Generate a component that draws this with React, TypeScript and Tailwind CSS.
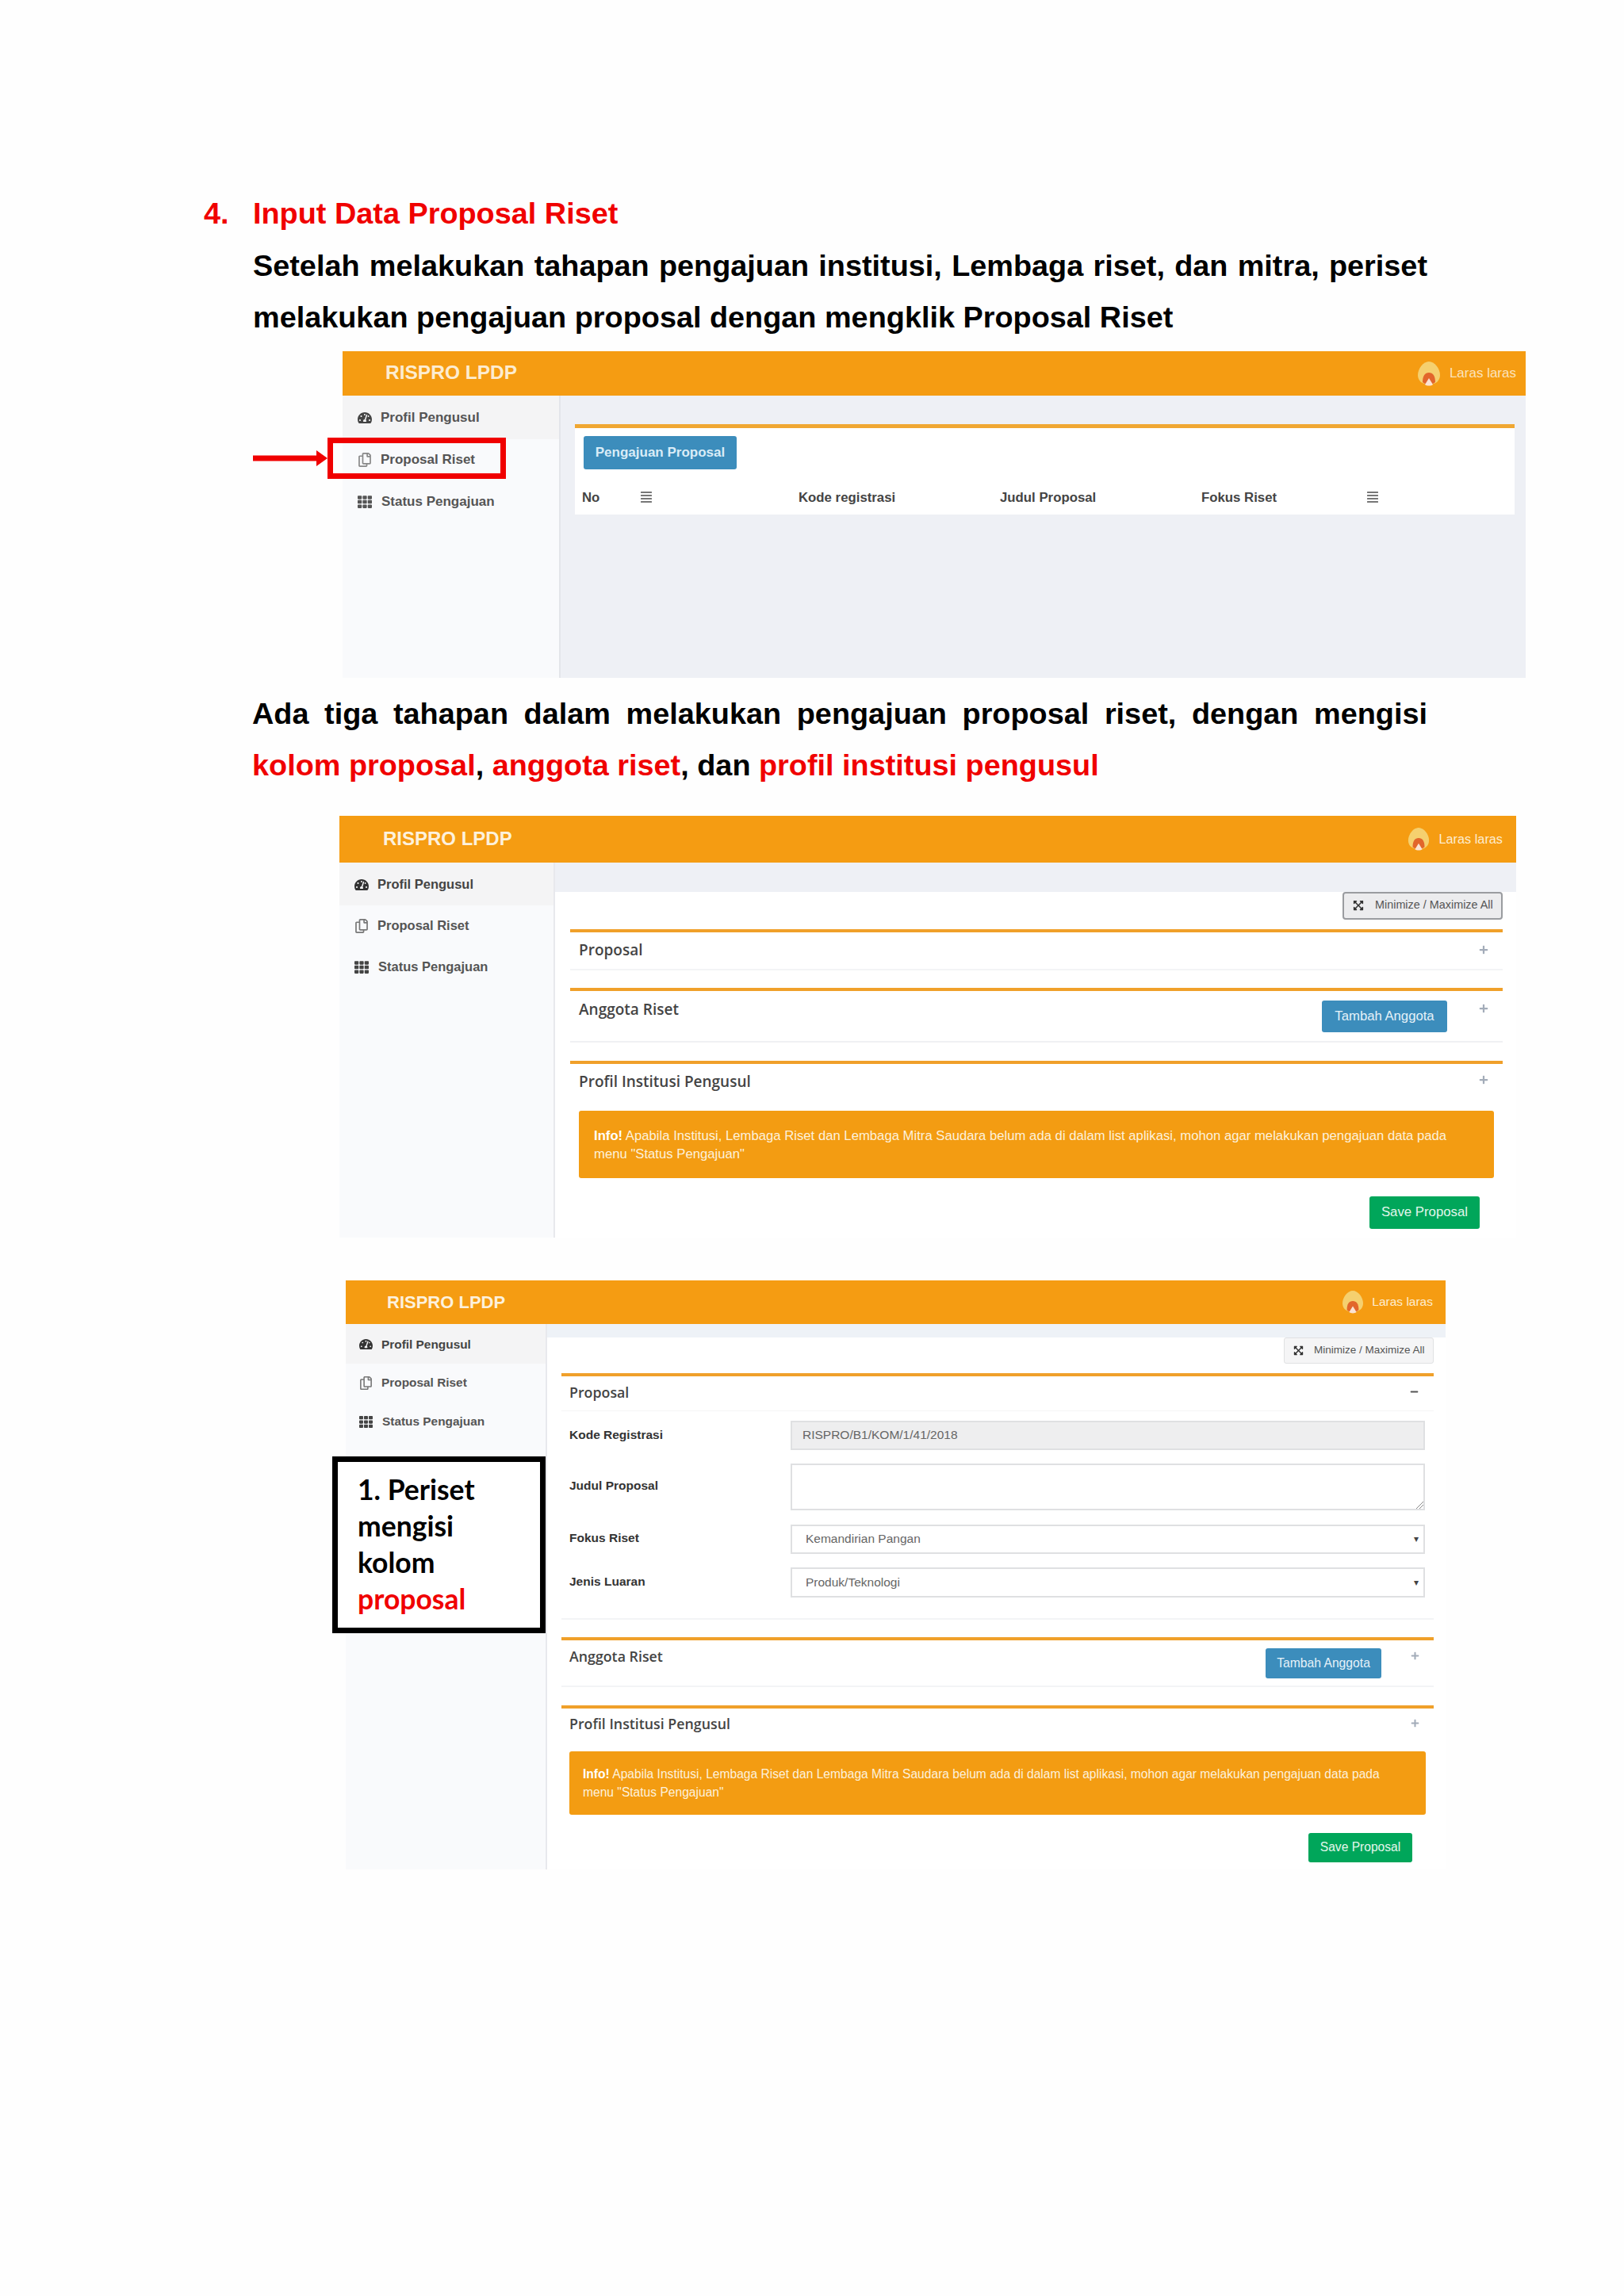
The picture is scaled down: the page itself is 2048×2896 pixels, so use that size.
import type { ReactNode } from "react";
import { FaTachometerAlt, FaRegCopy, FaTh, FaExpandArrowsAlt, FaPlus, FaMinus, FaAlignJustify } from "react-icons/fa";

function Flame({ className }: { className: string }) {
  return (
    <svg viewBox="0 0 28 32" className={className}>
      <path d="M14 1C21 1 28 10 28 18c0 7-5 12-14 12S0 25 0 18C0 10 7 1 14 1z" fill="#f5d06f" />
      <path d="M6 27C6 19 9 15 14 15s8 4 8 12c-2 2-5 3-8 3s-6-1-8-3z" fill="#e2662b" />
      <path d="M14 22l5 8c-2 2-8 2-10 0z" fill="#fbe3d2" />
    </svg>
  );
}

function NavItem({ icon, label, className }: { icon: ReactNode; label: string; className: string }) {
  return (
    <div className={`flex items-center ${className}`}>
      {icon}
      <span>{label}</span>
    </div>
  );
}

function Plus({ className }: { className: string }) {
  return <FaPlus className={`text-[#a3acb9] ${className}`} />;
}

const title = "font-['Open_Sans',sans-serif] font-semibold text-[#444]";

export default function App() {
  return (
    <div className="w-[2048px] h-[2896px] bg-[#fefefe] pt-[237px] font-['Liberation_Sans',Arial,sans-serif]">
      {/* heading */}
      <div className="flex text-[37.850px] leading-[65.5px] font-bold">
        <div className="w-[62px] ml-[257px] text-[#f00000]">4.</div>
        <div className="w-[1481px]">
          <div className="text-[#f00000]">Input Data Proposal Riset</div>
          <p className="text-justify text-black">
            Setelah melakukan tahapan pengajuan institusi, Lembaga riset, dan mitra, periset melakukan pengajuan proposal dengan mengklik Proposal Riset
          </p>
        </div>
      </div>

      {/* first screenshot */}
      <div className="relative ml-[432px] mt-[9px] w-[1492px] h-[412px] flex flex-col">
        <div className="h-[56px] bg-[#f59c12] flex items-center justify-between pl-[54px] pr-[12px] text-white">
          <span className="text-[24.500px] font-bold text-[#fdecd0]">RISPRO LPDP</span>
          <div className="flex items-center gap-[12px] text-[17px] text-[#fbe3bd]">
            <Flame className="w-[28px] h-[32px]" />
            Laras laras
          </div>
        </div>
        <div className="flex flex-1">
          <div className="w-[275px] bg-[#f9fafc] border-r-2 border-[#e3e5ea] text-[17px] font-bold text-[#555]">
            <NavItem className="h-[55px] pt-[2px] pl-[19px] gap-[11px] bg-[#f4f4f5]" icon={<FaTachometerAlt className="w-[18px] h-[18px] text-[#444]" />} label="Profil Pengusul" />
            <NavItem className="h-[53px] pl-[19px] gap-[11px]" icon={<FaRegCopy className="w-[18px] h-[18px] text-[#888]" />} label="Proposal Riset" />
            <NavItem className="h-[53px] pl-[19px] gap-[12px]" icon={<FaTh className="w-[18px] h-[18px] text-[#555]" />} label="Status Pengajuan" />
          </div>
          <div className="flex-1 bg-[#eef0f5] pt-[36px] pl-[18px] pr-[14px]">
            <div className="h-[114px] bg-white border-t-[5px] border-[#f0a732]">
              <button className="block ml-[11px] mt-[10px] w-[193px] h-[42px] bg-[#3c8dbc] rounded-[3px] text-[17px] font-bold text-[#d9ecf7]">
                Pengajuan Proposal
              </button>
              <div className="grid grid-cols-[73px_200px_254px_254px_208px_16px] items-center ml-[9px] mt-[23px] text-[16.800px] font-bold text-[#444]">
                <span>No</span>
                <FaAlignJustify className="w-[16px] h-[16px] text-[#777]" />
                <span>Kode registrasi</span>
                <span>Judul Proposal</span>
                <span>Fokus Riset</span>
                <FaAlignJustify className="w-[16px] h-[16px] text-[#777]" />
              </div>
            </div>
          </div>
        </div>

        {/* red callout over the sidebar */}
        <div className="absolute left-[-19px] top-[109px] w-[225px] h-[52px] border-[7px] border-[#f00000]" />
        <svg viewBox="0 0 94 24" className="absolute left-[-113px] top-[123px] w-[94px] h-[24px]">
          <path d="M0 8.500h80V2l14 10-14 10v-6.500H0z" fill="#f00000" />
        </svg>
      </div>

      {/* second paragraph */}
      <div className="ml-[318px] mt-[13px] w-[1482px] text-[37.850px] leading-[65.5px] font-bold text-black">
        <p className="text-justify">
          Ada tiga tahapan dalam melakukan pengajuan proposal riset, dengan mengisi <span className="text-[#f00000]">kolom proposal</span>, <span className="text-[#f00000]">anggota riset</span>, dan <span className="text-[#f00000]">profil institusi pengusul</span>
        </p>
      </div>

      {/* second screenshot */}
      <div className="ml-[428px] mt-[30px] w-[1484px] h-[532px] flex flex-col">
        <div className="h-[59px] bg-[#f59c12] flex items-center justify-between pl-[55px] pr-[17px]">
          <span className="text-[24px] font-bold text-[#fdf1dc]">RISPRO LPDP</span>
          <div className="flex items-center gap-[11px] text-[16.300px] text-[#fdecd0]">
            <Flame className="w-[28px] h-[30px]" />
            Laras laras
          </div>
        </div>
        <div className="flex flex-1">
          <div className="w-[272px] bg-[#f9fafc] border-r-2 border-[#e8e9ed] text-[16.500px] font-bold text-[#444]">
            <NavItem className="h-[54px] pt-[2px] pl-[19px] gap-[11px] bg-[#f4f4f5]" icon={<FaTachometerAlt className="w-[18px] h-[18px] text-[#333]" />} label="Profil Pengusul" />
            <NavItem className="h-[52px] pl-[19px] gap-[11px] text-[#555]" icon={<FaRegCopy className="w-[18px] h-[18px] text-[#777]" />} label="Proposal Riset" />
            <NavItem className="h-[52px] pl-[19px] gap-[12px] text-[#555]" icon={<FaTh className="w-[18px] h-[18px] text-[#444]" />} label="Status Pengajuan" />
          </div>
          <div className="flex-1 bg-white">
            <div className="h-[37px] bg-[#eef0f5]" />
            <div className="pl-[19px] pr-[17px]">
              <div className="flex justify-end">
                <button className="flex items-center w-[202px] h-[35px] pl-[11px] gap-[14px] bg-[#ececee] border-2 border-[#9a9ca0] rounded-[4px] text-[14.400px] text-[#555]">
                  <FaExpandArrowsAlt className="w-[14px] h-[14px] text-[#333]" />
                  Minimize / Maximize All
                </button>
              </div>
              <div className="mt-[12px] h-[52px] border-t-4 border-[#f0a02a] border-b-2 border-b-[#f3f4f6] flex justify-between pt-[8px] pl-[11px] pr-[18px]">
                <span className={`text-[19px] leading-[28px] ${title}`}>Proposal</span>
                <Plus className="w-[12px] h-[12px] mt-[8px]" />
              </div>
              <div className="mt-[22px] h-[69px] border-t-4 border-[#f0a02a] border-b-2 border-b-[#f0f1f3] flex pt-[9px] pl-[11px] pr-[18px]">
                <span className={`flex-1 text-[19px] leading-[28px] ${title}`}>Anggota Riset</span>
                <button className="w-[158px] h-[40px] mt-[3px] bg-[#3c8dbc] rounded-[3px] text-[16.700px] text-[#e6f2f9]">Tambah Anggota</button>
                <Plus className="w-[12px] h-[12px] mt-[7px] ml-[40px]" />
              </div>
              <div className="mt-[23px] border-t-4 border-[#f0a02a] pt-[8px] px-[11px] pb-[3px]">
                <div className="flex justify-between pr-[4px] h-[51px]">
                  <span className={`text-[19px] leading-[28px] ${title}`}>Profil Institusi Pengusul</span>
                  <Plus className="w-[12px] h-[12px] mt-[6px] mr-[3px]" />
                </div>
                <div className="h-[85px] bg-[#f39c12] rounded-[3px] pt-[20px] pl-[19px] text-[16.700px] leading-[23px] text-[#fdf1dc]">
                  <b className="text-white">Info!</b> Apabila Institusi, Lembaga Riset dan Lembaga Mitra Saudara belum ada di dalam list aplikasi, mohon agar melakukan pengajuan data pada<br />
                  menu "Status Pengajuan"
                </div>
              </div>
              <div className="flex justify-end mt-[20px] pr-[29px]">
                <button className="w-[139px] h-[41px] bg-[#00a65a] rounded-[3px] text-[16.800px] text-[#e3f6ec]">Save Proposal</button>
              </div>
            </div>
          </div>
        </div>
      </div>

      {/* third screenshot */}
      <div className="relative ml-[436px] mt-[54px] w-[1387px] h-[743px] flex flex-col">
        <div className="h-[55px] bg-[#f59c12] flex items-center justify-between pl-[52px] pr-[16px]">
          <span className="text-[22px] font-bold text-[#fdf1dc]">RISPRO LPDP</span>
          <div className="flex items-center gap-[11px] text-[15.500px] text-[#fdecd0]">
            <Flame className="w-[26px] h-[30px]" />
            Laras laras
          </div>
        </div>
        <div className="flex flex-1">
          <div className="w-[254px] bg-[#f9fafc] border-r-2 border-[#e8e9ed] text-[15.400px] font-bold text-[#444]">
            <NavItem className="h-[50px] pt-[2px] pl-[17px] gap-[11px] bg-[#f4f4f5]" icon={<FaTachometerAlt className="w-[17px] h-[17px] text-[#333]" />} label="Profil Pengusul" />
            <NavItem className="h-[49px] pl-[17px] gap-[11px] text-[#555]" icon={<FaRegCopy className="w-[17px] h-[17px] text-[#777]" />} label="Proposal Riset" />
            <NavItem className="h-[49px] pl-[17px] gap-[12px] text-[#555]" icon={<FaTh className="w-[17px] h-[17px] text-[#444]" />} label="Status Pengajuan" />
          </div>
          <div className="flex-1 bg-white">
            <div className="h-[17px] bg-[#eef2f7]" />
            <div className="pl-[18px] pr-[15px]">
              <div className="flex justify-end">
                <button className="flex items-center w-[189px] h-[33px] pl-[11px] gap-[13px] bg-[#f5f5f6] border border-[#e0e1e3] rounded-[3px] text-[13.500px] text-[#555]">
                  <FaExpandArrowsAlt className="w-[13px] h-[13px] text-[#333]" />
                  Minimize / Maximize All
                </button>
              </div>
              <div className="mt-[12px] h-[311px] border-t-4 border-[#f0a02a] border-b-2 border-b-[#f3f4f6]">
                <div className="flex justify-between h-[44px] pt-[7px] pl-[10px] pr-[19px] border-b border-[#f5f5f6]">
                  <span className={`text-[17.800px] leading-[26px] ${title}`}>Proposal</span>
                  <FaMinus className="w-[11px] h-[11px] mt-[7px] text-[#555]" />
                </div>
                <div className="grid grid-cols-[279px_800px] content-start pl-[10px] pt-[12px] text-[15.500px]">
                  <label className="font-bold text-[#333] self-start mt-[6px]">Kode Registrasi</label>
                  <div className="h-[37px] bg-[#eeeeef] border-2 border-[#dfe0e2] flex items-center pl-[13px] text-[#666]">RISPRO/B1/KOM/1/41/2018</div>
                  <label className="font-bold text-[#333] self-center mt-[15px]">Judul Proposal</label>
                  <div className="relative h-[59px] mt-[17px] border-2 border-[#dfe0e2] bg-white">
                    <svg viewBox="0 0 10 10" className="absolute right-0 bottom-0 w-[10px] h-[10px]">
                      <path d="M1 10L10 1M5 10l5-5" stroke="#888" strokeWidth="1" />
                    </svg>
                  </div>
                  <label className="font-bold text-[#333] self-center mt-[16px]">Fokus Riset</label>
                  <div className="h-[37px] mt-[18px] border-2 border-[#dfe0e2] flex items-center justify-between pl-[17px] pr-[6px] text-[#666]">
                    Kemandirian Pangan<span className="text-[12px] text-[#444]">▾</span>
                  </div>
                  <label className="font-bold text-[#333] self-center mt-[15px]">Jenis Luaran</label>
                  <div className="h-[38px] mt-[17px] border-2 border-[#dfe0e2] flex items-center justify-between pl-[17px] pr-[6px] text-[#666]">
                    Produk/Teknologi<span className="text-[12px] text-[#444]">▾</span>
                  </div>
                </div>
              </div>
              <div className="mt-[22px] h-[63px] border-t-4 border-[#f0a02a] border-b-2 border-b-[#f3f4f6] flex pt-[7px] pl-[10px] pr-[18px]">
                <span className={`flex-1 text-[17.800px] leading-[26px] ${title}`}>Anggota Riset</span>
                <button className="w-[146px] h-[38px] mt-[3px] bg-[#3c8dbc] rounded-[3px] text-[15.700px] text-[#e6f2f9]">Tambah Anggota</button>
                <Plus className="w-[11px] h-[11px] mt-[7px] ml-[37px]" />
              </div>
              <div className="mt-[23px] border-t-4 border-[#f0a02a] pt-[6px] px-[10px] pb-[2px]">
                <div className="flex justify-between h-[48px] pr-[8px]">
                  <span className={`text-[17.800px] leading-[26px] ${title}`}>Profil Institusi Pengusul</span>
                  <Plus className="w-[11px] h-[11px] mt-[7px]" />
                </div>
                <div className="h-[80px] bg-[#f39c12] rounded-[3px] pt-[17px] pl-[17px] text-[15.600px] leading-[23px] text-[#fdf1dc]">
                  <b className="text-white">Info!</b> Apabila Institusi, Lembaga Riset dan Lembaga Mitra Saudara belum ada di dalam list aplikasi, mohon agar melakukan pengajuan data pada<br />
                  menu "Status Pengajuan"
                </div>
              </div>
              <div className="flex justify-end mt-[21px] pr-[27px]">
                <button className="w-[131px] h-[37px] bg-[#00a65a] rounded-[3px] text-[15.600px] text-[#e3f6ec]">Save Proposal</button>
              </div>
            </div>
          </div>
        </div>

        {/* black callout over the sidebar */}
        <div className="absolute left-[-17px] top-[222px] w-[269px] h-[223px] border-[7px] border-black bg-white pl-[25px] pt-[12px] text-[35.500px] leading-[46px] font-bold text-black font-['Lato',sans-serif]">
          1. Periset<br />mengisi<br />kolom<br /><span className="text-[#f00000]">proposal</span>
        </div>
      </div>
    </div>
  );
}
